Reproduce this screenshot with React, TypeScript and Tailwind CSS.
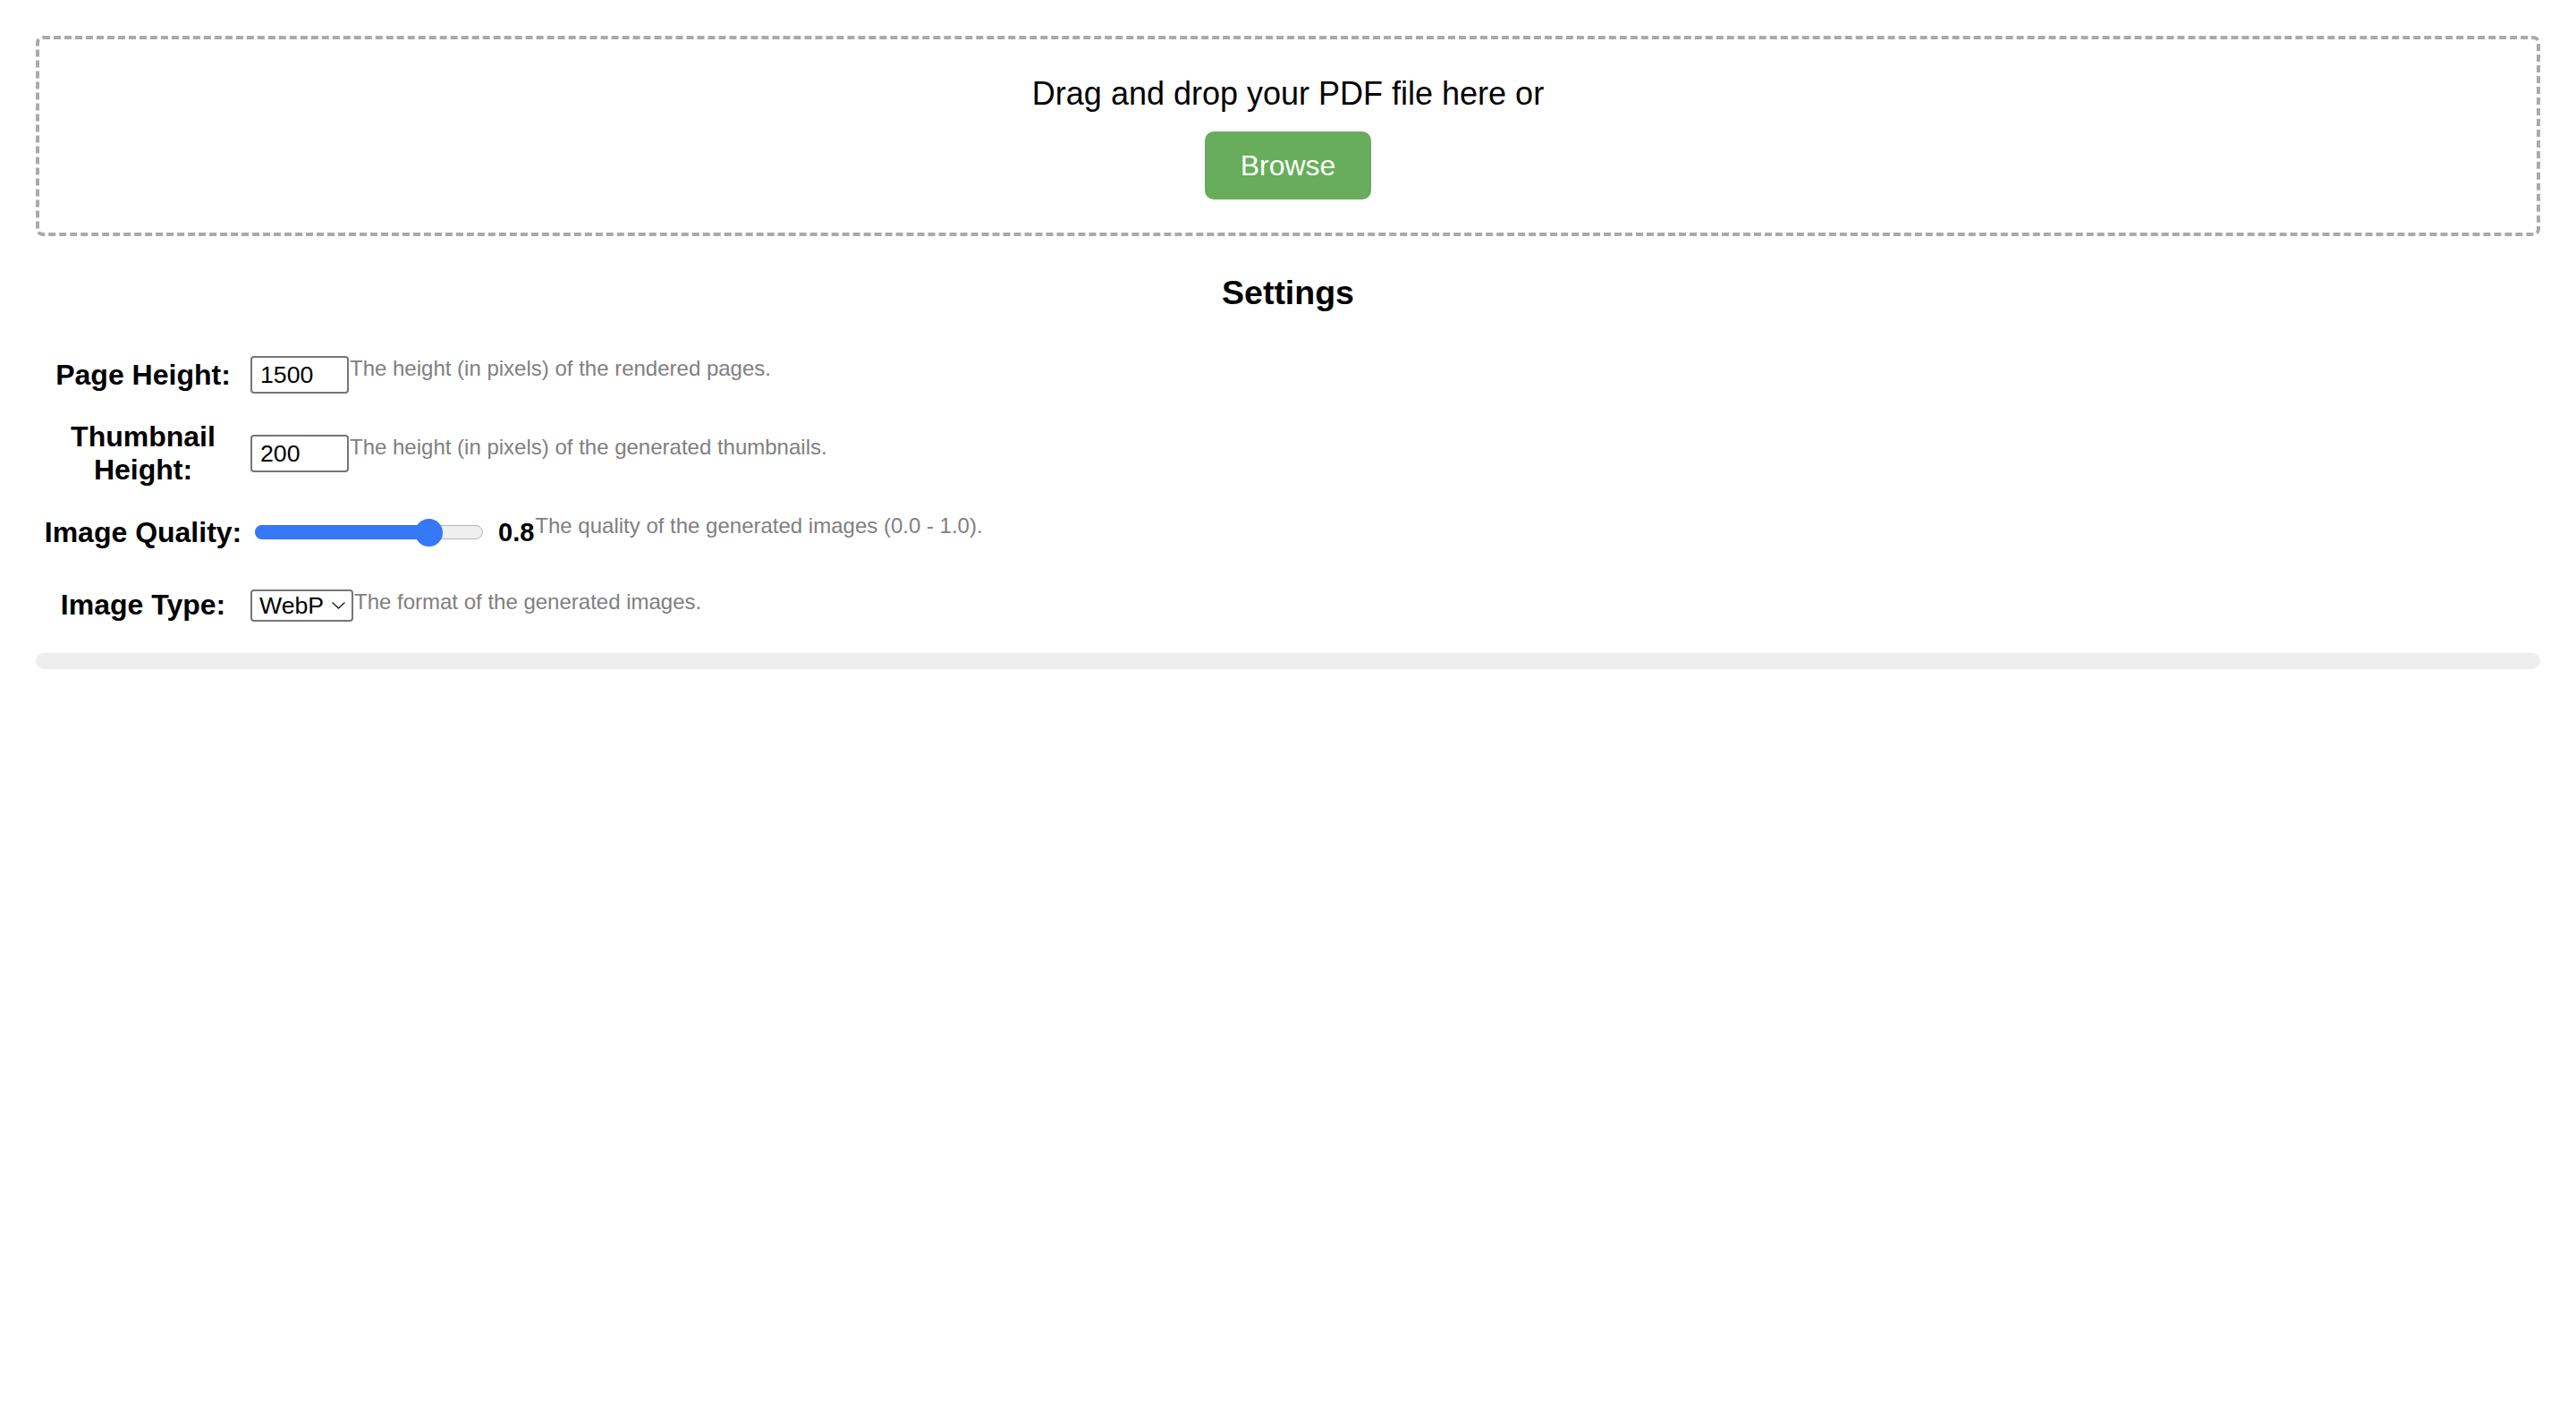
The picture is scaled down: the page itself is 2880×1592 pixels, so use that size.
import React from "react";

const settings = [
    { label: "Page Height:", value: "1500", help: "The height (in pixels) of the rendered pages." },
    { label: "Thumbnail Height:", value: "200", help: "The height (in pixels) of the generated thumbnails." },
];

function Slider({ value }: { value: number }) {
    // thumb travels inside the track, so inset by its radius
    const pos = 15.5 + value * (255 - 31);

    return (
        <div className="relative ml-[5px] flex h-[42px] w-[255px] items-center">
            <div className="h-[16px] w-full rounded-full border-[1.5px] border-[#b5b5b5] bg-[#efefef]" />
            <div className="absolute left-0 top-[13px] h-[16px] rounded-full bg-[#3478f6]" style={{ width: pos + 8 }} />
            <div className="absolute top-[5.5px] h-[31px] w-[31px] rounded-full bg-[#3478f6]" style={{ left: pos - 15.5 }} />
        </div>
    );
}

export default function App() {
    return (
        <div className="min-h-screen bg-white px-[40px] pt-[40px] font-['Liberation_Sans',Arial,sans-serif] text-black">
            <div className="box-border flex h-[224px] flex-col items-center rounded-[8px] border-[4px] border-dashed border-[#aaaaaa] pt-[40px]">
                <p className="text-[36px] leading-[41px]">Drag and drop your PDF file here or</p>
                <button className="mt-[22px] flex h-[76px] w-[186px] items-center justify-center rounded-[10px] bg-[#67ad5b] text-[32px] text-white">
                    Browse
                </button>
            </div>

            <h3 className="mt-[42px] text-center text-[37.5px] font-bold leading-[43px]">Settings</h3>

            <div className="mt-[49px] flex flex-col">
                {settings.map((s, i) => (
                    <div key={s.label} className={`flex items-center ${i > 0 ? "mt-[30px]" : ""}`}>
                        <label className="w-[240px] text-center text-[32px] font-bold leading-[37px]">{s.label}</label>
                        <div className="flex items-start">
                            <input
                                readOnly
                                value={s.value}
                                className="box-border h-[42px] w-[110px] rounded-[4px] border-2 border-[#767676] pl-[9px] text-[26.67px] outline-none"
                            />
                            <span className="ml-[1px] text-[24px] leading-[28px] text-[#808080]">{s.help}</span>
                        </div>
                    </div>
                ))}

                <div className="mt-[30px] flex items-center">
                    <label className="w-[240px] text-center text-[32px] font-bold leading-[37px]">Image Quality:</label>
                    <div className="flex items-start">
                        <Slider value={0.8} />
                        <span className="ml-[17px] self-center text-[29px] font-bold leading-[34px]">0.8</span>
                        <span className="ml-[1px] text-[24px] leading-[28px] text-[#808080]">The quality of the generated images (0.0 - 1.0).</span>
                    </div>
                </div>

                <div className="mt-[42px] flex items-center">
                    <label className="w-[240px] text-center text-[32px] font-bold leading-[37px]">Image Type:</label>
                    <div className="flex items-start">
                        <div className="box-border flex h-[36px] w-[115px] items-center rounded-[4px] border-2 border-[#767676] pl-[8px] pr-[7px] text-[26.67px]">
                            <span>WebP</span>
                            <svg className="ml-auto" width="15" height="8" viewBox="0 0 15 8" fill="none">
                                <path d="M1 1l6.5 6L14 1" stroke="#222" strokeWidth="1.5" strokeLinecap="round" strokeLinejoin="round" />
                            </svg>
                        </div>
                        <span className="ml-[1px] text-[24px] leading-[28px] text-[#808080]">The format of the generated images.</span>
                    </div>
                </div>
            </div>

            <div className="mt-[35px] h-[18px] w-full rounded-[9px] bg-[#eeeeee]" />
        </div>
    );
}
